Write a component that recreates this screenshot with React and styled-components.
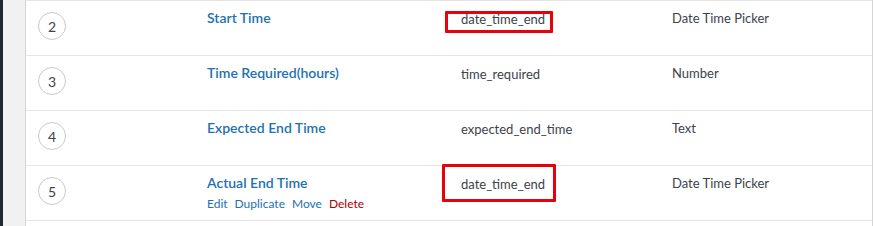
import styled, { createGlobalStyle } from 'styled-components';

const GlobalStyle = createGlobalStyle`
    html, body {
        margin: 0;
        padding: 0;
        background: #f1f1f1;
        font-family: Lato, "Open Sans", sans-serif;
    }
`

const fields = [
    { order: 2, label: 'Start Time', name: 'date_time_end', type: 'Date Time Picker', mark: { top: 10, left: 419, width: 108, height: 22 } },
    { order: 3, label: 'Time Required(hours)', name: 'time_required', type: 'Number' },
    { order: 4, label: 'Expected End Time', name: 'expected_end_time', type: 'Text' },
    { order: 5, label: 'Actual End Time', name: 'date_time_end', type: 'Date Time Picker', actions: true, mark: { top: -2, left: 416, width: 114, height: 38 } },
]

function FieldRow({ order, label, name, type, actions, mark }) {
    return (
        <Row>
            <OrderCell>
                <Circle>{order}</Circle>
            </OrderCell>
            <LabelCell>
                <Title>{label}</Title>
                {actions && (
                    <Actions>
                        <Action>Edit</Action>
                        <Action>Duplicate</Action>
                        <Action>Move</Action>
                        <Action $danger>Delete</Action>
                    </Actions>
                )}
            </LabelCell>
            <Cell $key>{name}</Cell>
            <Cell>{type}</Cell>
            {mark && <Mark $top={mark.top} $left={mark.left} $width={mark.width} $height={mark.height} />}
        </Row>
    )
}

export default function App() {
    return (
        <>
            <GlobalStyle />
            <Page>
                <AdminEdge />
                <Panel>
                    {fields.map(f => <FieldRow key={f.order} {...f} />)}
                    <Row />
                </Panel>
            </Page>
        </>
    )
}

const Page = styled.div`
    display: flex;
    height: 226px;
    overflow: hidden;
`

const AdminEdge = styled.div`
    width: 3px;
    background: #23282d;
    margin-right: 22px;
    flex-shrink: 0;
`

const Panel = styled.div`
    width: 846px;
    background: #fff;
    border-left: 1px solid #d5d5d5;
    border-right: 1px solid #d5d5d5;
`

const Row = styled.div`
    position: relative;
    display: grid;
    grid-template-columns: 181px 254px 211px 1fr;
    height: 54px;
    border-top: 1px solid #e5e5e5;
`

const OrderCell = styled.div`
    padding: 11px 0 0 12px;
`

const Circle = styled.div`
    width: 26px;
    height: 26px;
    border: 1px solid #c8c9cc;
    border-radius: 50%;
    display: flex;
    align-items: center;
    justify-content: center;
    font-size: 14px;
    color: #3c434a;
`

const LabelCell = styled.div`
    display: flex;
    flex-direction: column;
    padding-top: 7px;
`

const Title = styled.div`
    font-size: 14px;
    font-weight: 600;
    line-height: 20px;
    color: #2271b1;
`

const Actions = styled.div`
    display: flex;
    gap: 7px;
    margin-top: 1px;
    font-size: 12px;
    line-height: 20px;
`

const Action = styled.span`
    color: ${p => p.$danger ? '#a00' : '#2271b1'};
`

const Cell = styled.div`
    padding-top: ${p => p.$key ? '8px' : '7px'};
    font-size: 13px;
    line-height: 20px;
    color: #3c434a;
`

const Mark = styled.div`
    position: absolute;
    top: ${p => p.$top}px;
    left: ${p => p.$left}px;
    width: ${p => p.$width}px;
    height: ${p => p.$height}px;
    box-sizing: border-box;
    border: 3px solid #e8000b;
    border-radius: 1px;
    pointer-events: none;
`
